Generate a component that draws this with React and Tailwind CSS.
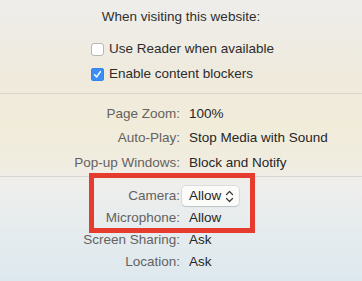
import React from "react";

function Checkbox({ checked }) {
  if (checked) {
    return (
      <span className="flex h-[13px] w-[13px] items-center justify-center rounded-[3px] bg-[#3a8ef6] shadow-[inset_0_0_0_0.5px_#2f7be0]">
        <svg width="9" height="9" viewBox="0 0 9 9">
          <path d="M1.6 4.8 L3.6 7 L7.4 1.6" fill="none" stroke="#fff" strokeWidth="1.5" strokeLinecap="round" strokeLinejoin="round" />
        </svg>
      </span>
    );
  }
  return (
    <span className="block h-[13px] w-[13px] rounded-[3px] border border-[#b9b7b2] bg-white" />
  );
}

function Row({ label, children }) {
  return (
    <>
      <div className="text-right text-[#64625f]">{label}:</div>
      <div className="text-[#262626]">{children}</div>
    </>
  );
}

export default function App() {
  return (
    <div className="relative h-[281px] w-[362px] overflow-hidden bg-[linear-gradient(180deg,#eeedeb_0%,#efeadb_30%,#f1ecda_45%,#f0ecdf_58%,#eeeeec_66%,#e6ecee_82%,#dde8ee_100%)] font-['Liberation_Sans',Arial,sans-serif] text-[13.5px]">
      <div className="h-[93px] pt-[8px]">
        <div className="text-center leading-[18px] text-[#2f2f2f]">When visiting this website:</div>
        <div className="mt-[14px] flex flex-col gap-[7px] pl-[91px] text-[#2c2c2c]">
          <div className="flex h-[18px] items-center gap-[5px]">
            <Checkbox />
            <span>Use Reader when available</span>
          </div>
          <div className="flex h-[18px] items-center gap-[5px]">
            <Checkbox checked />
            <span>Enable content blockers</span>
          </div>
        </div>
      </div>
      <div className="h-px bg-[#d9d6ce]" />
      <div className="grid h-[82px] grid-cols-[180px_1fr] gap-x-[9px] pt-[9px] leading-[22px]">
        <Row label="Page Zoom">100%</Row>
        <Row label="Auto-Play">Stop Media with Sound</Row>
        <Row label="Pop-up Windows">Block and Notify</Row>
      </div>
      <div className="h-px bg-[#d6d6d4]" />
      <div className="grid grid-cols-[180px_1fr] gap-x-[9px] pt-[8px] leading-[22px]">
        <Row label="Camera">
          <div className="flex h-[22px] items-center">
            <span className="-ml-[7px] flex h-[20px] w-[57px] items-center justify-between rounded-[4px] bg-[#fbfbfa] pl-[7px] pr-[5px] leading-[20px] shadow-[0_0_0_0.5px_rgba(0,0,0,0.15),0_1px_1px_rgba(0,0,0,0.12)]">
              <span>Allow</span>
              <svg width="9" height="13" viewBox="0 0 9 13">
                <path d="M1.5 4.5 L4.5 1.5 L7.5 4.5 M1.5 8.5 L4.5 11.5 L7.5 8.5" fill="none" stroke="#3a3a3a" strokeWidth="1.2" strokeLinecap="round" strokeLinejoin="round" />
              </svg>
            </span>
          </div>
        </Row>
        <Row label="Microphone">Allow</Row>
        <Row label="Screen Sharing">Ask</Row>
        <Row label="Location">Ask</Row>
      </div>
      <div className="absolute left-[89px] top-[173px] h-[60px] w-[166px] border-[5px] border-[#e63b2f]" />
    </div>
  );
}
